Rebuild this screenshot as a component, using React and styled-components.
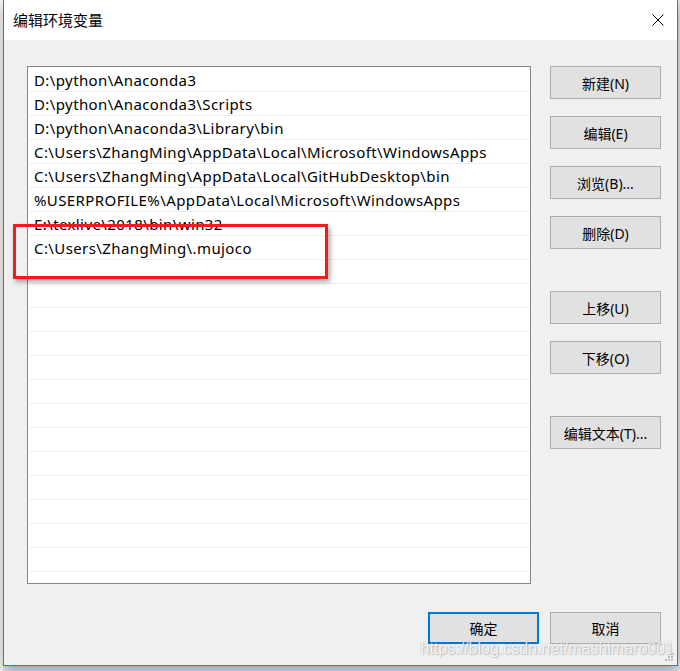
import React from "react";
import styled, { createGlobalStyle } from "styled-components";

const Global = createGlobalStyle`
  html, body { margin: 0; padding: 0; }
  body {
    background: #e9e9e9;
    font-family: "Noto Sans", "Noto Sans CJK SC", sans-serif;
    width: 680px;
    height: 671px;
    overflow: hidden;
  }
`;

const Stage = styled.div`
  display: flex;
  width: 680px;
  height: 671px;
`;

const Behind = styled.div`
  width: 3px;
  flex: none;
  background: #fbfbfb;
  overflow: hidden;
`;

const Window = styled.div`
  position: relative;
  width: 675px;
  height: 666px;
  box-sizing: border-box;
  border: 1px solid #2b7bd3;
  border-top: none;
  background: #f0f0f0;
  display: flex;
  flex-direction: column;
  box-shadow: 0 5px 14px rgba(0, 0, 0, 0.35);
`;

const TitleBar = styled.div`
  height: 40px;
  flex: none;
  background: #ffffff;
  display: flex;
  align-items: center;
  justify-content: space-between;
  padding: 0 13px 0 9px;
`;

const Title = styled.div`
  font-family: "Noto Sans CJK SC", sans-serif;
  font-size: 15px;
  color: #000;
  padding-bottom: 1px;
`;

const CloseIcon = styled.svg`
  width: 12px;
  height: 12px;
  display: block;
`;

const Body = styled.div`
  display: flex;
  padding: 26px 16px 0 23px;
  gap: 19px;
`;

const ListBox = styled.div`
  width: 504px;
  height: 518px;
  box-sizing: border-box;
  border: 1px solid #828790;
  background: #ffffff;
  padding: 1px;
  overflow: hidden;
`;

const Row = styled.div`
  box-sizing: content-box;
  height: 22px;
  padding: 1px 0 0 5px;
  border-bottom: 1px solid #efefef;
  font-family: "Noto Sans", "Noto Sans CJK SC", sans-serif;
  font-size: 15px;
  letter-spacing: 0.4px;
  line-height: 23px;
  color: #000;
  white-space: nowrap;
`;

const SideButtons = styled.div`
  display: flex;
  flex-direction: column;
  width: 111px;
`;

const Button = styled.div`
  width: 111px;
  height: ${(p) => p.$h || 33}px;
  box-sizing: border-box;
  margin-top: ${(p) => p.$gap || 0}px;
  background: #e1e1e1;
  border: ${(p) => (p.$primary ? "2px solid #0078d7" : "1px solid #adadad")};
  display: flex;
  align-items: center;
  justify-content: center;
  font-family: "Noto Sans", "Noto Sans CJK SC", sans-serif;
  font-size: 14px;
  color: #000;
`;

const Footer = styled.div`
  display: flex;
  justify-content: flex-end;
  gap: 11px;
  padding: 28px 16px 0 0;
`;

const Highlight = styled.div`
  position: absolute;
  left: 9px;
  top: 224px;
  width: 315px;
  height: 55px;
  box-sizing: border-box;
  border: 3px solid #ee1c1c;
  box-shadow: 2px 3px 5px rgba(0, 0, 0, 0.35);
  pointer-events: none;
`;

const Watermark = styled.div`
  position: absolute;
  right: 3px;
  bottom: 7px;
  font-family: "Liberation Sans", sans-serif;
  font-size: 16px;
  color: rgba(255, 255, 255, 0.85);
  text-shadow: 0 0 2px rgba(0, 0, 0, 0.25), 1px 1px 1px rgba(0, 0, 0, 0.15);
  white-space: nowrap;
`;

const Grip = styled.svg`
  position: absolute;
  right: 3px;
  bottom: 3px;
  width: 10px;
  height: 10px;
`;

const paths = [
  "D:\\python\\Anaconda3",
  "D:\\python\\Anaconda3\\Scripts",
  "D:\\python\\Anaconda3\\Library\\bin",
  "C:\\Users\\ZhangMing\\AppData\\Local\\Microsoft\\WindowsApps",
  "C:\\Users\\ZhangMing\\AppData\\Local\\GitHubDesktop\\bin",
  "%USERPROFILE%\\AppData\\Local\\Microsoft\\WindowsApps",
  "E:\\texlive\\2018\\bin\\win32",
  "C:\\Users\\ZhangMing\\.mujoco",
];

const rows = [...paths, ...Array(14).fill("")];

const side = [
  { label: "新建(N)", gap: 0 },
  { label: "编辑(E)", gap: 17 },
  { label: "浏览(B)...", gap: 17 },
  { label: "删除(D)", gap: 17 },
  { label: "上移(U)", gap: 42 },
  { label: "下移(O)", gap: 17 },
  { label: "编辑文本(T)...", gap: 42 },
];

export default function App() {
  return (
    <>
      <Global />
      <Stage>
        <Behind />
        <Window>
          <TitleBar>
            <Title>编辑环境变量</Title>
            <CloseIcon viewBox="0 0 12 12">
              <path d="M0.5 0.5 L11.5 11.5 M11.5 0.5 L0.5 11.5" stroke="#000" strokeWidth="1" fill="none" />
            </CloseIcon>
          </TitleBar>
          <Body>
            <ListBox>
              {rows.map((r, i) => (
                <Row key={i}>{r || "\u00a0"}</Row>
              ))}
            </ListBox>
            <SideButtons>
              {side.map((b) => (
                <Button key={b.label} $gap={b.gap}>
                  {b.label}
                </Button>
              ))}
            </SideButtons>
          </Body>
          <Footer>
            <Button $primary $h={32}>确定</Button>
            <Button $h={32}>取消</Button>
          </Footer>
          <Highlight />
          <Watermark>https://blog.csdn.net/mashimaro001</Watermark>
          <Grip viewBox="0 0 10 10">
            {[
              [8, 2], [8, 5], [8, 8], [5, 5], [5, 8], [2, 8],
            ].map(([x, y]) => (
              <rect key={`${x}-${y}`} x={x - 1} y={y - 1} width="2" height="2" fill="#bcbcbc" />
            ))}
          </Grip>
        </Window>
      </Stage>
    </>
  );
}
